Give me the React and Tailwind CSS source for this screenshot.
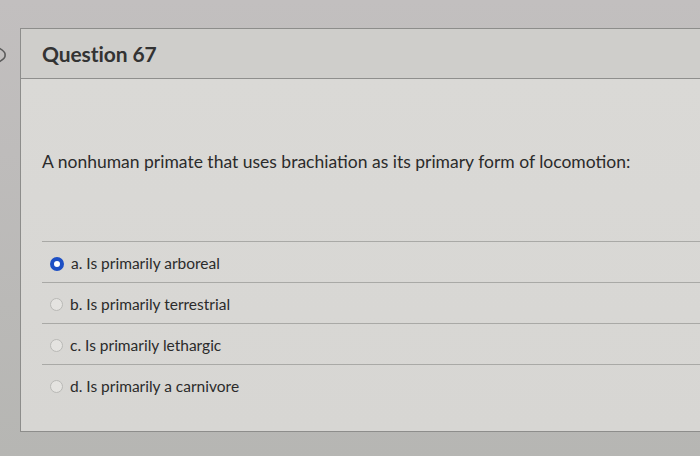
const options = [
  { id: 'a', label: 'a. Is primarily arboreal' },
  { id: 'b', label: 'b. Is primarily terrestrial' },
  { id: 'c', label: 'c. Is primarily lethargic' },
  { id: 'd', label: 'd. Is primarily a carnivore' },
];

function Radio({ checked }) {
  if (checked) {
    return (
      <span className="w-[14px] h-[14px] rounded-full border-[4px] border-[#1d4fc4] bg-white shrink-0" />
    );
  }
  return (
    <span className="w-[13px] h-[13px] rounded-full border border-[#b9b9b6] bg-[#e4e3e0] shrink-0" />
  );
}

export default function App() {
  const selected = 'a';

  return (
    <div
      className="w-[700px] h-[456px] overflow-hidden flex flex-col bg-gradient-to-b from-[#c2bfbf] to-[#b6b6b3] text-[#2e2e2e]"
      style={{ fontFamily: 'Lato, "Open Sans", sans-serif' }}
    >
      <div className="flex flex-1">
        <div className="w-5 shrink-0 pt-[46px]">
          <svg width="10" height="18" viewBox="0 0 10 18" className="-ml-[2px]">
            <path d="M1 2 Q8 6 7 9 Q8 12 1 16" fill="none" stroke="#5a5a5a" strokeWidth="1.6" />
          </svg>
        </div>
        <div className="flex-1 mt-7 mb-[24px] border-l border-t border-b border-[#8d8d8b] flex flex-col">
          <div className="h-[50px] shrink-0 bg-[#cfcecb] border-b border-[#8f8f8d] flex items-center pl-[21px]">
            <h1 className="text-[21px] font-bold text-[#333] tracking-[-0.1px]">Question 67</h1>
          </div>
          <div className="flex-1 bg-gradient-to-b from-[#dad9d6] to-[#d7d6d3] pl-[21px] flex flex-col">
            <p className="pt-[73px] h-[162px] text-[17.5px] leading-[20px] text-[#2b2b2b]">
              A nonhuman primate that uses brachiation as its primary form of locomotion:
            </p>
            <div className="flex flex-col">
              {options.map((o) => (
                <div
                  key={o.id}
                  className="h-[41px] pt-[3px] border-t border-[#a9a9a6] flex items-center gap-[7px] pl-[8px]"
                >
                  <Radio checked={o.id === selected} />
                  <span className="text-[15.5px] text-[#2b2b2b]">{o.label}</span>
                </div>
              ))}
            </div>
          </div>
        </div>
      </div>
    </div>
  );
}
